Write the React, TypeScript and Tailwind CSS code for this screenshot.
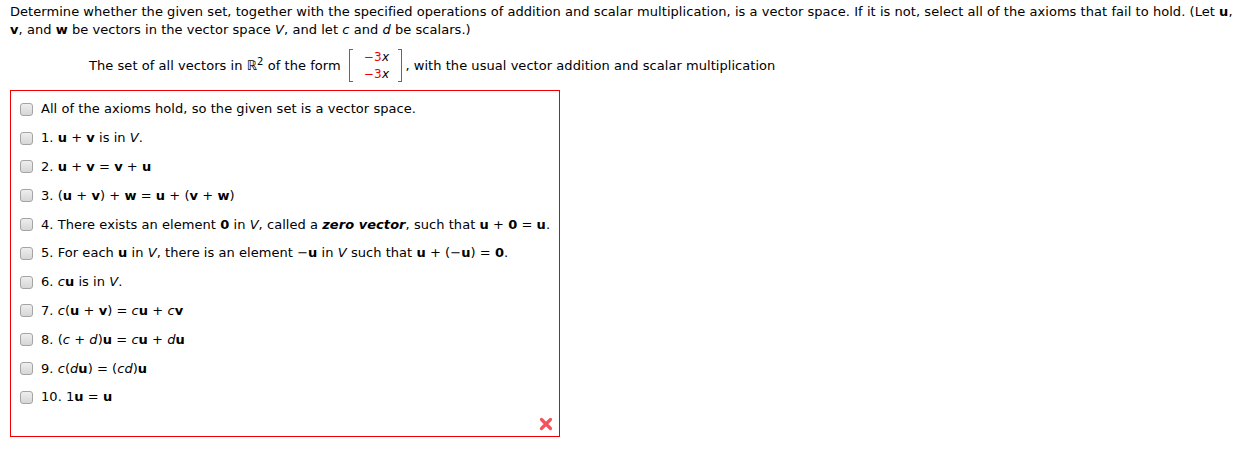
import React from "react";

const font = { fontFamily: '"DejaVu Sans", Verdana, sans-serif' };

function Box() {
  return (
    <span className="inline-block h-[13px] w-[13px] shrink-0 rounded-[3px] border border-[#a4a4a4] bg-gradient-to-b from-[#eeeeee] to-[#d6d6d6]" />
  );
}

function Row({ children }: { children: React.ReactNode }) {
  return (
    <label className="flex h-[28.8px] items-center gap-[8px]">
      <Box />
      <span>{children}</span>
    </label>
  );
}

const B = ({ children }: { children: React.ReactNode }) => <b className="font-bold">{children}</b>;
const I = ({ children }: { children: React.ReactNode }) => <i className="italic">{children}</i>;

function Matrix() {
  return (
    <span className="ml-[8px] mr-[3px] inline-flex h-[33px] items-stretch align-middle">
      <span className="w-[4px] border-y border-l border-[#666]" />
      <span className="flex flex-col justify-center pl-[11px] pr-[9px] text-[12px] leading-[17px] tracking-[0.3px]">
        <span>
          <span className="text-[#e00]">−3</span>
          <I>x</I>
        </span>
        <span>
          <span className="text-[#e00]">−3</span>
          <I>x</I>
        </span>
      </span>
      <span className="w-[4px] border-y border-r border-[#666]" />
    </span>
  );
}

export default function App() {
  return (
    <div
      className="bg-white pl-[10px] pr-0 pt-[3px] text-[13px] leading-[18px] tracking-[0.05px] text-black"
      style={font}
    >
      <p>
        Determine whether the given set, together with the specified operations of addition and scalar
        multiplication, is a vector space. If it is not, select all of the axioms that fail to hold. (Let{" "}
        <B>u</B>, <B>v</B>, and <B>w</B> be vectors in the vector space <I>V</I>, and let <I>c</I> and{" "}
        <I>d</I> be scalars.)
      </p>
      <div className="mt-[10px] flex items-center pl-[79px]">
        <span>
          The set of all vectors in ℝ<sup className="text-[10px]">2</sup> of the form
        </span>
        <Matrix />
        <span>, with the usual vector addition and scalar multiplication</span>
      </div>
      <div className="mt-[8px] w-[550px] border border-[#e00] pl-[9px] pr-[6px] pt-[4px] pb-[5px]">
        <Row>All of the axioms hold, so the given set is a vector space.</Row>
        <Row>
          1. <B>u</B> + <B>v</B> is in <I>V</I>.
        </Row>
        <Row>
          2. <B>u</B> + <B>v</B> = <B>v</B> + <B>u</B>
        </Row>
        <Row>
          3. (<B>u</B> + <B>v</B>) + <B>w</B> = <B>u</B> + (<B>v</B> + <B>w</B>)
        </Row>
        <Row>
          4. There exists an element <B>0</B> in <I>V</I>, called a{" "}
          <b className="font-bold italic">zero vector</b>, such that <B>u</B> + <B>0</B> = <B>u</B>.
        </Row>
        <Row>
          5. For each <B>u</B> in <I>V</I>, there is an element −<B>u</B> in <I>V</I> such that <B>u</B> + (−
          <B>u</B>) = <B>0</B>.
        </Row>
        <Row>
          6. <I>c</I>
          <B>u</B> is in <I>V</I>.
        </Row>
        <Row>
          7. <I>c</I>(<B>u</B> + <B>v</B>) = <I>c</I>
          <B>u</B> + <I>c</I>
          <B>v</B>
        </Row>
        <Row>
          8. (<I>c</I> + <I>d</I>)<B>u</B> = <I>c</I>
          <B>u</B> + <I>d</I>
          <B>u</B>
        </Row>
        <Row>
          9. <I>c</I>(<I>d</I>
          <B>u</B>) = (<I>cd</I>)<B>u</B>
        </Row>
        <Row>
          10. 1<B>u</B> = <B>u</B>
        </Row>
        <div className="mt-[5px] flex justify-end">
          <svg width="14" height="14" viewBox="0 0 14 14">
            <path d="M2.5 2.5 L11.5 11.5 M11.5 2.5 L2.5 11.5" stroke="#f4525c" strokeWidth="3.2" strokeLinecap="round" />
          </svg>
        </div>
      </div>
    </div>
  );
}
